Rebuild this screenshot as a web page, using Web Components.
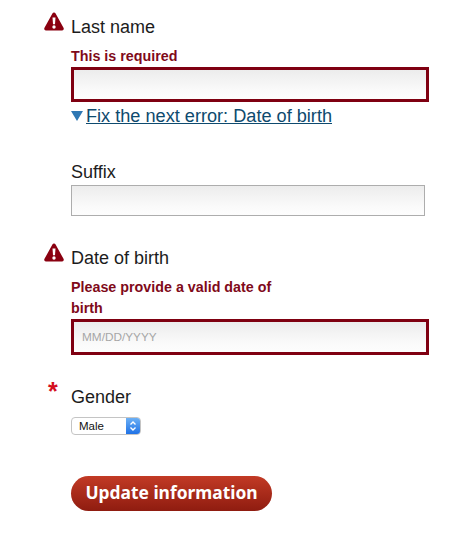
<!DOCTYPE html>
<html>
<head>
<meta charset="utf-8">
<style>
    html, body { margin: 0; background: #fff; }
    body {
        padding: 16px 0 0 44px;
        font-family: "Liberation Sans", Arial, sans-serif;
        color: #1c1c1c;
    }
</style>
</head>
<body>
<form-field label="Last name" marker="error" gap-after="34">
    <error-message>This is required</error-message>
    <text-box invalid></text-box>
    <fix-link>Fix the next error: Date of birth</fix-link>
</form-field>
<form-field label="Suffix" gap-after="31" tight>
    <text-box></text-box>
</form-field>
<form-field label="Date of birth" marker="error" gap-after="31">
    <error-message>Please provide a valid date of birth</error-message>
    <text-box invalid tall placeholder="MM/DD/YYYY"></text-box>
</form-field>
<form-field label="Gender" marker="required" gap-after="41" loose>
    <select-box>Male</select-box>
</form-field>
<submit-button>Update information</submit-button>

<script>
class FormField extends HTMLElement {
    constructor() {
        super();
        this.attachShadow({ mode: 'open' });
    }

    connectedCallback() {
        const marker = this.getAttribute('marker');
        let icon = '';
        if (marker === 'error') {
            icon = `<svg width="20" height="19" viewBox="0 0 20 19">
                <path fill="#8a0010" d="M10 .6c.7 0 1.200.4 1.600 1l7.900 14.200c.7 1.200 0 2.600-1.400 2.600H1.900C.5 18.400-.2 17 .5 15.800L8.400 1.600c.4-.6.9-1 1.600-1z"/>
                <path fill="#fff" d="M8.500 5.400h3l-.5 6.800H9zM10 13.300a1.700 1.700 0 1 1 0 3.400 1.700 1.700 0 0 1 0-3.400z"/>
            </svg>`;
        } else if (marker === 'required') {
            icon = `<span class="star">*</span>`;
        }
        this.shadowRoot.innerHTML = `
            <style>
                :host {
                    display: grid;
                    grid-template-columns: 27px 1fr;
                    width: 385px;
                    margin-bottom: ${this.getAttribute('gap-after') || 30}px;
                }
                .marker { position: relative; }
                svg { position: absolute; left: 0; top: -4px; }
                .star {
                    position: absolute;
                    left: 4px;
                    top: -11px;
                    color: #d40f1e;
                    font: bold 25px/32px "Liberation Sans", Arial, sans-serif;
                }
                .label {
                    font-size: 18px;
                    line-height: 22px;
                    color: #1c1c1c;
                    margin-bottom: ${this.hasAttribute('tight') ? 2 : this.hasAttribute('loose') ? 9 : 8}px;
                }
            </style>
            <div class="marker">${icon}</div>
            <div>
                <div class="label">${this.getAttribute('label')}</div>
                <slot></slot>
            </div>
        `;
    }
}

class ErrorMessage extends HTMLElement {
    constructor() {
        super();
        this.attachShadow({ mode: 'open' }).innerHTML = `
            <style>
                :host {
                    display: block;
                    max-width: 215px;
                    color: #7f0a1a;
                    font: bold 14.300px/21px "Liberation Sans", Arial, sans-serif;
                }
            </style>
            <slot></slot>
        `;
    }
}

class TextBox extends HTMLElement {
    constructor() {
        super();
        this.attachShadow({ mode: 'open' });
    }

    connectedCallback() {
        const placeholder = this.getAttribute('placeholder') || '';
        this.shadowRoot.innerHTML = `
            <style>
                :host {
                    display: flex;
                    align-items: center;
                    box-sizing: border-box;
                    width: 354px;
                    height: 31px;
                    padding: 0 8px;
                    border: 1px solid #adadad;
                    background: linear-gradient(to bottom, #ececec, #fafafa 70%, #fdfdfd);
                    color: #a6a6a6;
                    font: 11.800px "Liberation Sans", Arial, sans-serif;
                }
                :host([invalid]) {
                    width: 358px;
                    height: 35px;
                    border: 3px solid #7f0011;
                }
                :host([tall]) { height: 36px; }
            </style>
            ${placeholder}
        `;
    }
}

class FixLink extends HTMLElement {
    constructor() {
        super();
        this.attachShadow({ mode: 'open' }).innerHTML = `
            <style>
                :host {
                    display: flex;
                    align-items: center;
                    gap: 3px;
                    margin-top: 3px;
                    font: 18.150px/22px "Liberation Sans", Arial, sans-serif;
                    color: #0e4a6e;
                }
                svg { flex: none; }
                a { color: inherit; text-decoration: underline; }
            </style>
            <svg width="12" height="10" viewBox="0 0 12 10"><path fill="#2f78b4" d="M0 0h12L6 10z"/></svg>
            <a href="#"><slot></slot></a>
        `;
    }
}

class SelectBox extends HTMLElement {
    constructor() {
        super();
        this.attachShadow({ mode: 'open' }).innerHTML = `
            <style>
                :host {
                    display: flex;
                    box-sizing: border-box;
                    width: 70px;
                    height: 18px;
                    border: 1px solid #c4c4c4;
                    border-radius: 4px;
                    background: #fff;
                    overflow: hidden;
                    font: 11.500px/16px "Liberation Sans", Arial, sans-serif;
                    color: #111;
                }
                .value { flex: 1; padding-left: 7px; }
                .arrows {
                    width: 14px;
                    background: linear-gradient(to bottom, #6cb0f5, #1f72e6);
                }
                svg { display: block; }
            </style>
            <div class="value"><slot></slot></div>
            <div class="arrows">
                <svg width="14" height="16" viewBox="0 0 14 16">
                    <path fill="none" stroke="#fff" stroke-width="1.400" d="M4.500 6.500 7 4l2.500 2.500M4.500 9.500 7 12l2.500-2.500"/>
                </svg>
            </div>
        `;
    }
}

class SubmitButton extends HTMLElement {
    constructor() {
        super();
        this.attachShadow({ mode: 'open' }).innerHTML = `
            <style>
                :host {
                    display: block;
                    margin-left: 27px;
                    width: 201px;
                }
                button {
                    display: block;
                    box-sizing: border-box;
                    width: 100%;
                    height: 35px;
                    padding: 0 0 3px;
                    border: 0;
                    border-radius: 18px;
                    background: linear-gradient(to bottom, #c23a25, #8f1c10);
                    color: #fff;
                    font: bold 17.400px "Noto Sans", sans-serif;
                }
            </style>
            <button type="button"><slot></slot></button>
        `;
    }
}

customElements.define('form-field', FormField);
customElements.define('error-message', ErrorMessage);
customElements.define('text-box', TextBox);
customElements.define('fix-link', FixLink);
customElements.define('select-box', SelectBox);
customElements.define('submit-button', SubmitButton);
</script>
</body>
</html>
